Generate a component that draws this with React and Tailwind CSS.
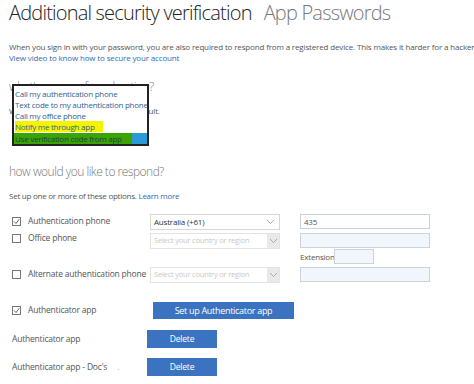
import { useState } from 'react'

const font = { fontFamily: '"Open Sans", "Noto Sans", sans-serif' }

const CheckBox = ({ checked }) => (
  <div className='shrink-0 w-[9px] h-[9px] border border-[#777] bg-white flex items-center justify-center'>
    {checked && (
      <svg width="7" height="7" viewBox="0 0 7 7">
        <path d="M1 3.5 L3 5.5 L6.2 1.2" fill="none" stroke="#555" strokeWidth="0.9" />
      </svg>
    )}
  </div>
)

const Chevron = () => (
  <svg width="9" height="6" viewBox="0 0 9 6">
    <path d="M1 1 L4.5 4.5 L8 1" fill="none" stroke="#999" strokeWidth="0.8" />
  </svg>
)

const CountrySelect = ({ value }) => {
  if (value) {
    return (
      <div className='shrink-0 w-[130px] h-[16px] border border-[#d6d6d6] bg-white flex items-center justify-between pl-[3px] pr-[4px]'>
        <span className='text-[8px] tracking-[-0.2px] text-[#333]'>{value}</span>
        <Chevron />
      </div>
    )
  }
  return (
    <div className='shrink-0 w-[130px] h-[16px] border border-[#e3e3e3] bg-white flex items-center justify-between pl-[3px] overflow-hidden'>
      <span className='text-[7.5px] tracking-[-0.2px] text-[#c8c8c8]'>Select your country or region</span>
      <div className='w-[12px] h-[14px] bg-[#e9e9e9] flex items-center justify-center'>
        <Chevron />
      </div>
    </div>
  )
}

const PhoneInput = ({ value }) => (
  <div className={'shrink-0 w-[130px] h-[15px] border border-[#c9d3dc] flex items-center pl-[3px] ' + (value ? 'bg-white' : 'bg-[#f0f6fb]')}>
    <span className='text-[8px] tracking-[-0.2px] text-[#555]'>{value}</span>
  </div>
)

const BlueButton = ({ children, wide }) => (
  <div className={(wide ? 'w-[141px] h-[17px] text-[9px] tracking-[-0.3px] ' : 'w-[70px] h-[18px] text-[8.5px] tracking-[-0.2px] ') + 'shrink-0 bg-[#3b73c1] text-white flex items-center justify-center'}>
    {children}
  </div>
)

const App = () => {
  const [open] = useState(true)

  return (
    <div className='w-[474px] h-[384px] bg-white overflow-hidden relative text-[#555]' style={font}>
      <div className='pl-[9px] flex items-baseline gap-[12px] whitespace-nowrap font-light leading-[26px] tracking-[-0.8px]'>
        <h1 className='text-[20px] text-[#222]'>Additional security verification</h1>
        <span className='text-[20px] text-[#777]'>App Passwords</span>
      </div>

      <div className='pl-[9px] mt-[16px] text-[8px] tracking-[-0.15px] leading-[10.5px] whitespace-nowrap'>
        <p>When you sign in with your password, you are also required to respond from a registered device. This makes it harder for a hacker to</p>
        <p className='text-[#2f6db5]'>View video to know how to secure your account</p>
      </div>

      <div className='pl-[9px] mt-[16px] whitespace-nowrap'>
        <p className='text-[12px] leading-[16px] tracking-[-0.5px] text-[#777] font-light'>what's your preferred option?</p>
        <p className='mt-[10px] text-[8px] leading-[12px] tracking-[-0.2px]'>We'll use this verification option by default.</p>
      </div>

      {open && (
        <div className='absolute left-[12px] top-[84px] w-[137px] border-2 border-[#222] bg-white text-[8px] tracking-[-0.25px] text-[#2f5f93] leading-[11px] pt-[2px] whitespace-nowrap'>
          <div className='pl-[1px]'>Call my authentication phone</div>
          <div className='pl-[1px]'>Text code to my authentication phone</div>
          <div className='pl-[1px]'>Call my office phone</div>
          <div className='pl-[1px]'><span className='bg-[#f6f300] pr-[8px]'>Notify me through app</span></div>
          <div className='bg-[#2b9ad8] mt-[1px]'><span className='bg-[#3aa400] text-[#1e3b5c] pl-[1px] pr-[10px] inline-block'>Use verification code from app</span></div>
        </div>
      )}

      <h2 className='pl-[9px] mt-[47px] text-[12px] leading-[16px] tracking-[-0.5px] text-[#777] font-light'>how would you like to respond?</h2>

      <p className='pl-[9px] mt-[10px] text-[8px] leading-[11px] tracking-[-0.25px]'>
        Set up one or more of these options. <span className='text-[#2f6db5]'>Learn more</span>
      </p>

      <div className='pl-[12px] mt-[12px] text-[8.5px] tracking-[-0.2px] whitespace-nowrap'>
        <div className='flex items-center h-[17px]'>
          <div className='w-[138px] flex items-center gap-[7px]'>
            <CheckBox checked />
            <span>Authentication phone</span>
          </div>
          <CountrySelect value='Australia (+61)' />
          <div className='ml-[20px]'><PhoneInput value='435' /></div>
        </div>

        <div className='flex items-center h-[17px] mt-[2px]'>
          <div className='w-[138px] flex items-center gap-[7px] self-start'>
            <CheckBox />
            <span>Office phone</span>
          </div>
          <CountrySelect />
          <div className='ml-[20px]'><PhoneInput /></div>
        </div>

        <div className='flex items-center h-[15px] ml-[288px]'>
          <span className='text-[8px] w-[34px]'>Extension</span>
          <div className='w-[40px] h-[15px] border border-[#c9d3dc] bg-[#f0f6fb]' />
        </div>

        <div className='flex items-center h-[17px] mt-[2px]'>
          <div className='w-[138px] flex items-center gap-[7px]'>
            <CheckBox />
            <span>Alternate authentication phone</span>
          </div>
          <CountrySelect />
          <div className='ml-[20px]'><PhoneInput /></div>
        </div>

        <div className='flex items-center h-[17px] mt-[19px]'>
          <div className='w-[141px] flex items-center gap-[7px]'>
            <CheckBox checked />
            <span>Authenticator app</span>
          </div>
          <BlueButton wide>Set up Authenticator app</BlueButton>
        </div>
      </div>

      <div className='pl-[12px] mt-[11px] text-[8.5px] tracking-[-0.2px] whitespace-nowrap'>
        <div className='flex items-center h-[18px]'>
          <span className='w-[135px]'>Authenticator app</span>
          <BlueButton>Delete</BlueButton>
        </div>
        <div className='flex items-center h-[18px] mt-[10px]'>
          <span className='w-[135px]'>Authenticator app - Doc's <span className='ml-[8px] text-[#bbb]'>.</span></span>
          <BlueButton>Delete</BlueButton>
        </div>
      </div>
    </div>
  )
}

export default App
